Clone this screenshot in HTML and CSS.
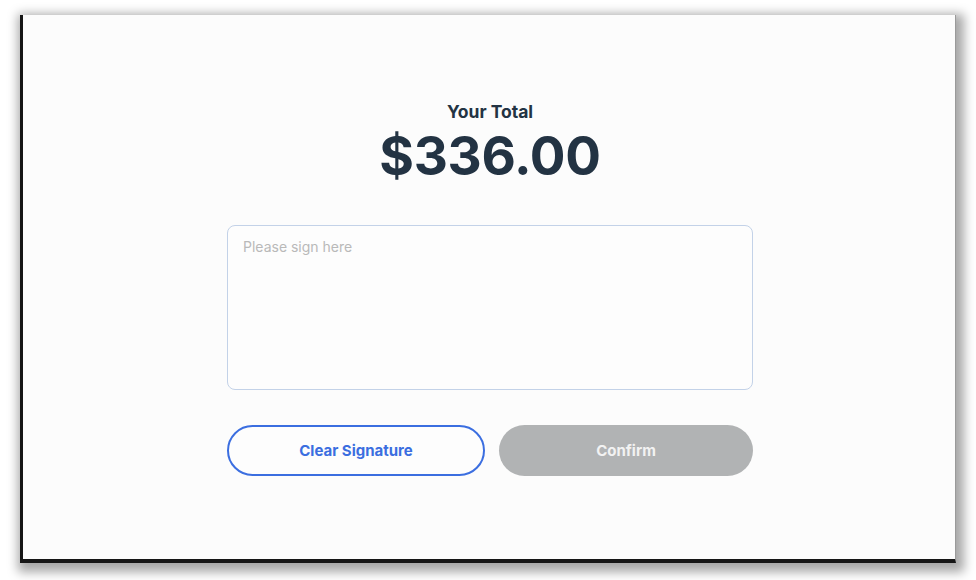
FILE: index.html
```html
<!DOCTYPE html>
<html lang="en">
<head>
    <meta charset="UTF-8">
    <meta name="viewport" content="width=device-width, initial-scale=1.0">
    <title>Signature</title>
    <link rel="stylesheet" href="styles.css">
</head>
<body>
    <div class="window">
        <div class="checkout">
            <div class="total">
                <p class="total-label">Your Total</p>
                <h1 class="total-amount">$336.00</h1>
            </div>
            <div class="signature-pad">
                <span class="placeholder">Please sign here</span>
            </div>
            <div class="actions">
                <button class="btn btn-outline" type="button">Clear Signature</button>
                <button class="btn btn-disabled" type="button" disabled>Confirm</button>
            </div>
        </div>
    </div>
</body>
</html>
```

FILE: styles.css
```css
html, body {
    margin: 0;
    padding: 0;
    height: 100%;
    overflow: hidden;
}
body {
    font-family: Inter, 'Noto Sans', sans-serif;
    background: #ffffff;
    padding: 15px 20px 0 20px;
    box-sizing: border-box;
}
.window {
    width: 936px;
    height: 548px;
    box-sizing: border-box;
    background: #fcfcfc;
    border-left: 3px solid #161616;
    border-bottom: 4px solid #161616;
    border-right: 1px solid #9a9a9a;
    box-shadow: 3px 4px 10px 5px rgba(0, 0, 0, 0.35);
    display: flex;
    justify-content: center;
}
.checkout {
    width: 526px;
    padding-top: 86px;
    display: flex;
    flex-direction: column;
    align-items: stretch;
    margin-left: 2px;
}
.total {
    text-align: center;
    color: #233343;
}
.total-label {
    margin: 0;
    font-size: 17.5px;
    font-weight: 700;
    line-height: 22px;
}
.total-amount {
    margin: 4px 0 0 0;
    font-size: 53px;
    font-weight: 700;
    line-height: 58px;
    letter-spacing: -0.3px;
}
.signature-pad {
    margin-top: 40px;
    height: 165px;
    box-sizing: border-box;
    border: 1px solid #c3d2e8;
    border-radius: 8px;
    background: #fdfdfd;
    padding: 10px 15px;
}
.placeholder {
    font-size: 14px;
    color: #b9b9b9;
}
.actions {
    margin-top: 35px;
    display: flex;
    gap: 14px;
}
.btn {
    flex: 1 1 0;
    height: 51px;
    border-radius: 26px;
    font-family: Inter, 'Noto Sans', sans-serif;
    font-size: 15px;
    font-weight: 700;
    cursor: pointer;
}
.btn-outline {
    background: #fdfdfd;
    border: 2px solid #3b6ee0;
    color: #3b6ee0;
}
.btn-disabled {
    background: #b1b3b4;
    border: none;
    color: #f2f2f2;
    cursor: default;
}
```
